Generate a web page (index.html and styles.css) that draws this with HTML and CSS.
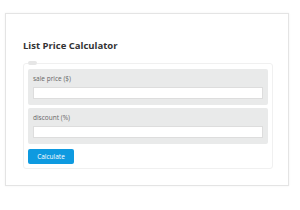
FILE: index.html
```html
<html>
<head>
<link rel="stylesheet" href="styles.css">
</head>
<body>
<div class="card">
  <h2 class="title">List Price Calculator</h2>
  <fieldset class="calc">
    <legend class="pill"></legend>
    <div class="field">
      <label for="sale">sale price ($)</label>
      <input type="text" id="sale">
    </div>
    <div class="field">
      <label for="discount">discount (%)</label>
      <input type="text" id="discount">
    </div>
    <button class="calcbtn">Calculate</button>
  </fieldset>
</div>
</body>
</html>
```

FILE: styles.css
```css
body {
  margin: 0;
  padding: 13px 0 0 5px;
  background: #fff;
  font-family: "Open Sans", "Liberation Sans", sans-serif;
}

.card {
  width: 284px;
  height: 173px;
  box-sizing: border-box;
  border: 1px solid #e4e4e4;
  box-shadow: 0 0 2px rgba(0,0,0,0.06);
  padding: 25px 16px 0 17px;
}

.title {
  margin: 0 0 8px 0;
  font-size: 9.5px;
  font-weight: bold;
  color: #333;
  line-height: 14px;
}

.calc {
  margin: 0;
  border: 1px solid #f0f0f0;
  border-radius: 3px;
  padding: 4px 4px 4px 4px;
  width: 250px;
  box-sizing: border-box;
}

.pill {
  width: 9px;
  height: 4px;
  padding: 0;
  margin-left: 0;
  background: #e6e6e6;
  border-radius: 3px;
}

.field {
  background: #e9eaea;
  border-radius: 2px;
  padding: 5px 5px 6px 5px;
  margin-bottom: 3px;
  height: 36px;
  box-sizing: border-box;
}

.field label {
  display: block;
  font-size: 6.5px;
  color: #666;
  line-height: 9px;
  margin-bottom: 4px;
}

.field input {
  display: block;
  width: 100%;
  height: 12px;
  box-sizing: border-box;
  border: 1px solid #ddd;
  background: #fff;
  padding: 0;
}

.calcbtn {
  margin-top: 2px;
  background-color: #0e9ae0;
  color: white;
  border: none;
  border-radius: 2px;
  font-family: "Open Sans", "Liberation Sans", sans-serif;
  font-size: 6.5px;
  width: 46px;
  height: 15px;
  padding: 0;
}
```
